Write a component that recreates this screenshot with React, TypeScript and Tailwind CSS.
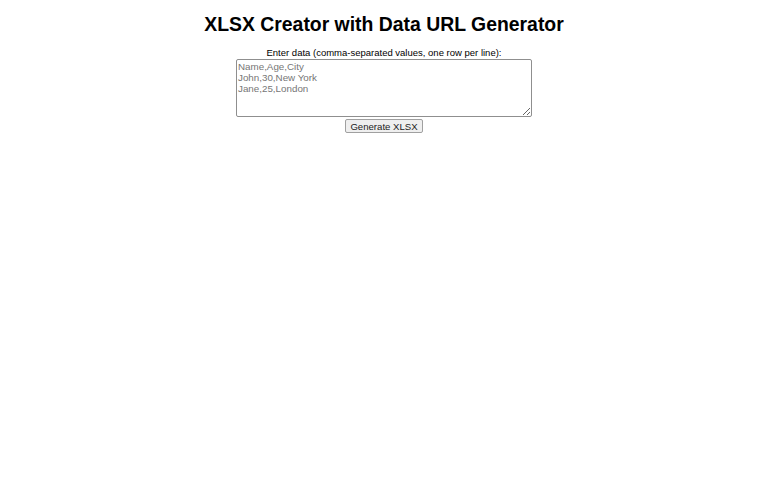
import { useState } from 'react'

export default function App() {
    const [data, setData] = useState<string>('')

    return (
        <div className="min-h-[480px] bg-white text-center text-black font-['Liberation_Sans',Arial,sans-serif]">
            <h1 className="pt-[12px] text-[19.4px] leading-[24px] font-bold">XLSX Creator with Data URL Generator</h1>

            <div className="mt-[11px] flex flex-col items-center">
                <label htmlFor="data" className="text-[9.5px] leading-[12px]">
                    Enter data (comma-separated values, one row per line):
                </label>
                <textarea
                    id="data"
                    value={data}
                    onChange={(e) => setData(e.target.value)}
                    placeholder={"Name,Age,City\nJohn,30,New York\nJane,25,London"}
                    className="w-[296px] h-[58px] border border-[#8f8f8f] rounded-[2px] px-[1px] pt-[1px] text-[9.8px] leading-[11px] placeholder:text-[#767676] resize"
                />
                <button className="mt-[2px] h-[14px] px-[4px] text-[9.6px] leading-[11px] text-[#222] bg-[#efefef] border border-[#a0a0a0] rounded-[2px]">
                    Generate XLSX
                </button>
            </div>
        </div>
    )
}
